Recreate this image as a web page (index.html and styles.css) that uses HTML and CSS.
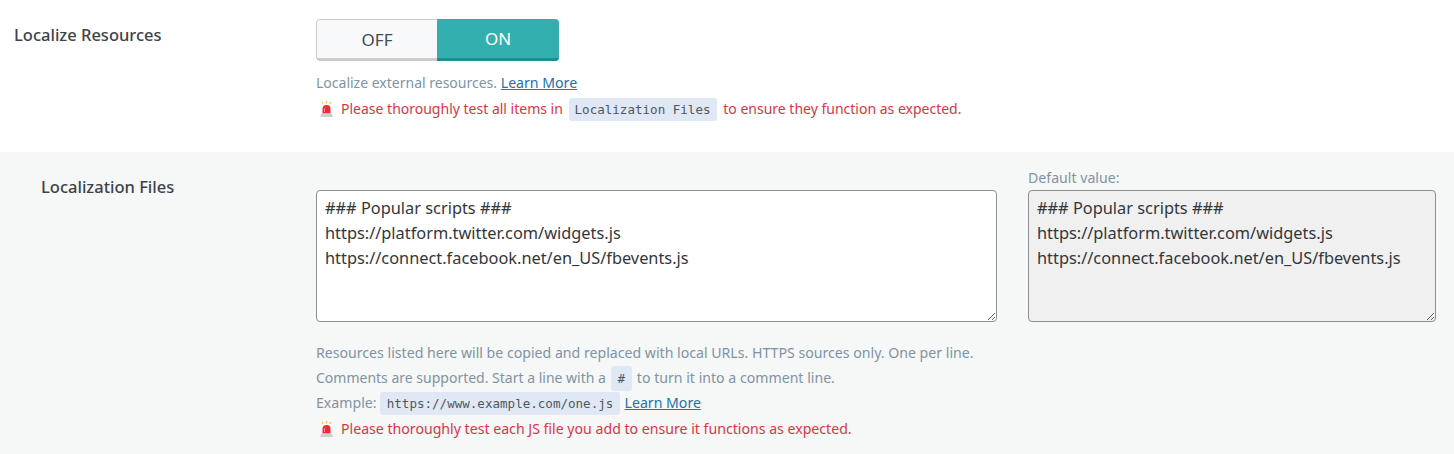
FILE: index.html
```html
<!DOCTYPE html>
<html lang="en">
<head>
<meta charset="utf-8">
<title>Localize Resources</title>
<link rel="stylesheet" href="styles.css">
</head>
<body>
<section class="row">
  <h3 class="label">Localize Resources</h3>
  <div class="field">
    <div class="toggle"><span class="opt off">OFF</span><span class="opt on">ON</span></div>
    <div class="desc first"><span class="tight">Localize external resources.</span> <a href="#">Learn More</a></div>
    <div class="warn"><svg class="siren" viewBox="0 0 15 16"><path class="rays" d="M3 1l1.3 1.8M7.5 0v2.4M12 1l-1.3 1.8"/><path class="dome" d="M3.5 12.5V8a4 4 0 0 1 8 0v4.5z"/><path class="shine" d="M5.5 11V8a2 2 0 0 1 1-1.7"/><path class="base" d="M2.5 12.5h10l1.5 3.5H1z"/></svg><span class="tight">Please thoroughly test all items in</span> <code>Localization Files</code> <span class="tight">to ensure they function as expected.</span></div>
  </div>
</section>
<section class="row sub">
  <h4 class="label">Localization Files</h4>
  <div class="columns">
    <div class="field main">
      <textarea class="area" spellcheck="false">### Popular scripts ###
https://platform.twitter.com/widgets.js
https://connect.facebook.net/en_US/fbevents.js</textarea>
    </div>
    <div class="field side">
      <div class="default-label">Default value:</div>
      <textarea class="area readonly" readonly spellcheck="false">### Popular scripts ###
https://platform.twitter.com/widgets.js
https://connect.facebook.net/en_US/fbevents.js</textarea>
    </div>
    <div class="notes">
      <div class="desc">Resources listed here will be copied and replaced with local URLs. HTTPS sources only. One per line.</div>
      <div class="desc"><span class="tight">Comments are supported. Start a line with a</span> <code class="hash">#</code> to turn it into a comment line.</div>
      <div class="desc">Example: <code class="sample">https://www.example.com/one.js</code> <a href="#">Learn More</a></div>
      <div class="warn"><svg class="siren" viewBox="0 0 15 16"><path class="rays" d="M3 1l1.3 1.8M7.5 0v2.4M12 1l-1.3 1.8"/><path class="dome" d="M3.5 12.5V8a4 4 0 0 1 8 0v4.5z"/><path class="shine" d="M5.5 11V8a2 2 0 0 1 1-1.7"/><path class="base" d="M2.5 12.5h10l1.5 3.5H1z"/></svg>Please thoroughly test each JS file you add to ensure it functions as expected.</div>
    </div>
  </div>
</section>
</body>
</html>
```
FILE: styles.css
```css
* { box-sizing: border-box; }
html, body { height: 100%; }
body {
  margin: 0;
  background: #fff;
  font-family: "Noto Sans", sans-serif;
  font-size: 14.13px;
  color: #32373c;
  overflow: hidden;
}
.row { display: flex; align-items: flex-start; }
.row:first-child { height: 152px; padding: 19px 0 0 14px; }
.label {
  margin: 0;
  font-size: 16.5px;
  font-weight: 500;
  line-height: 31px;
  color: #3c434a;
}
.row:first-child .label { width: 302px; }
.sub { background: #f6f7f7; height: 302px; padding: 19px 18px 0 41px; }
.sub .label { width: 275px; }
.toggle {
  display: flex;
  width: 243px;
  height: 42px;
  border-radius: 4px;
  overflow: hidden;
  font-size: 17px;
  line-height: 39px;
  text-align: center;
}
.opt { display: block; }
.off {
  width: 121px;
  background: #f8f9fb;
  color: #3c4c5c;
  border: 1px solid #ccc;
  border-right: 0;
  border-bottom: 3px solid #ccc;
  border-radius: 4px 0 0 4px;
}
.on {
  width: 122px;
  background: #33afaf;
  color: #fff;
  border-bottom: 3px solid #1d8e8e;
  line-height: 40px;
}
.desc { color: #8093a6; line-height: 25px; }
.tight { font-size: 14px; }
.first { margin-top: 9px; }
.desc a { color: #2271b1; }
.warn { color: #dc3545; line-height: 26px; padding-top: 1px; }
.siren { display: inline-block; width: 15px; height: 16px; margin: 0 7px 0 3px; vertical-align: -3px; }
.rays { stroke: #f4bb3a; stroke-width: 1.1; fill: none; }
.dome { fill: #ee2a35; }
.shine { stroke: #f98a8f; stroke-width: 1; fill: none; }
.base { fill: #cfcfcf; }
code {
  font-family: "DejaVu Sans Mono", monospace;
  font-size: 12.55px;
  line-height: 14px;
  background: #dfe8f4;
  color: #50575e;
  padding: 4px 6px;
  margin: 0 1px;
  border-radius: 3px;
}
.warn code { margin: 0 3px 0 2px; }
.hash { padding: 5px 7px; }
.sample { margin: 0 1px 0 0; padding: 4px 6.5px; }
.columns {
  flex: 1;
  display: grid;
  grid-template-columns: 681px 408px;
  column-gap: 31px;
  align-items: end;
}
.area {
  display: block;
  width: 100%;
  height: 132px;
  padding: 5px 8px;
  border: 1px solid #8c8f94;
  border-radius: 4px;
  background: #fff;
  font-family: "Noto Sans", sans-serif;
  font-size: 16.35px;
  line-height: 25px;
  color: #32373c;
}
.readonly { background: #f0f0f0; }
.default-label { color: #8093a6; line-height: 14px; margin-bottom: 5px; }
.notes { grid-column: 1 / -1; margin-top: 18px; }
```
